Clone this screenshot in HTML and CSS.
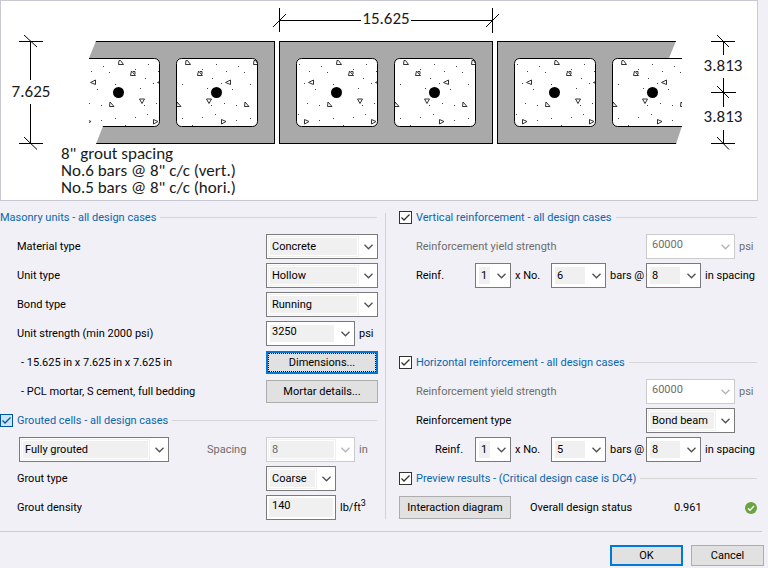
FILE: index.html
```html
<!DOCTYPE html>
<html lang="en">
<head>
  <meta charset="UTF-8" />
  <meta name="viewport" content="width=device-width, initial-scale=1.0"/>
  <title>Masonry wall design</title>
  <link rel="stylesheet" href="styles.css">
</head>
<body>
  <form class="dialog" id="designForm">
    <div class="preview">
      <svg class="drawing" viewBox="1 1 756 199" role="img" aria-label="Wall section">
        <defs>
          <clipPath id="cells">
            <rect x="17.5" y="58.5" width="81" height="68" rx="5" />
            <rect x="115.5" y="58.5" width="81" height="68" rx="5" />
          </clipPath>
          <clipPath id="breakLeft">
            <path d="M96 41L89 58V126H103L96 144H276V41Z" />
          </clipPath>
          <clipPath id="breakRight">
            <path d="M676 41L669 58H682V126L676 144H497V41Z" />
          </clipPath>

          <!-- one tile of the concrete hatch -->
          <g id="hatch">
            <path class="stone" d="M58 60.5L57.500 64.500H62.500L59.500 60.500ZM70.500 71L69.500 75.500H74.500ZM72 71.500H74V74M34.500 80V84.500L29.500 82.500ZM49 102L48.500 106.500H53ZM78.500 99H83.500L81 103.500ZM25.500 119.500V124L30 121.500Z" />
            <path class="grit" d="M20 64.500h1M30 71.500h1M42 66.500h1M48 72.500h1M25 83.500h1M36 89.500h1M54 84.500h1M28 103.500h1M40 105.500h1M19 114.500h1M40 120.500h1M54 118.500h1M64 125.500h1M74 117.500h1M79 88.500h1M84 78.500h1M83 105.500h1M74 69.500h1" />
          </g>

          <g id="block">
            <rect class="shell" x="0.500" y="41.500" width="213" height="102" />
            <rect class="cell" x="17.500" y="58.500" width="81" height="68" rx="5" />
            <rect class="cell" x="115.500" y="58.500" width="81" height="68" rx="5" />
            <g clip-path="url(#cells)">
              <use href="#hatch" />
              <use href="#hatch" x="67" />
              <use href="#hatch" x="135" />
            </g>
            <rect class="edge" x="17.500" y="58.500" width="81" height="68" rx="5" />
            <rect class="edge" x="115.500" y="58.500" width="81" height="68" rx="5" />
            <circle cx="57.500" cy="92.500" r="5.500" />
            <circle cx="155.500" cy="92.500" r="5.500" />
          </g>
        </defs>

        <g clip-path="url(#breakLeft)"><use href="#block" x="61" /></g>
        <use href="#block" x="279" />
        <g clip-path="url(#breakRight)"><use href="#block" x="497" /></g>

        <!-- dimension lines -->
        <path class="dim" d="M30.500 41V80M30.500 104V143M19 41.500H43M19 143.500H43M279.500 8V32M492.500 8V33M279 20.500H361M411 20.500H492M723.500 41V55M723.500 78V107M723.500 130V143M711 41.500H735M711 92.500H736M711 143.500H735" />
        <path class="tick" d="M24 35L37 47M24 137L37 149.500M273 27L286 14M486 27L499 14M717 35L729 47M717 86L729 98M717 137L729 149.500" />

        <text x="31" y="97" text-anchor="middle">7.625</text>
        <text x="386" y="24" text-anchor="middle">15.625</text>
        <text x="723" y="71" text-anchor="middle">3.813</text>
        <text x="723" y="122" text-anchor="middle">3.813</text>
        <text x="61" y="159">8" grout spacing</text>
        <text x="61" y="176">No.6 bars @ 8" c/c (vert.)</text>
        <text x="61" y="193">No.5 bars @ 8" c/c (hori.)</text>
      </svg>
    </div>

    <div class="columns">
      <div class="column left">
        <div class="row legend"><span>Masonry units - all design cases</span></div>
        <div class="row">
          <label for="material">Material type</label>
          <div class="field"><select id="material" class="boxed"><option>Concrete</option></select></div>
        </div>
        <div class="row">
          <label for="unitType">Unit type</label>
          <div class="field"><select id="unitType" class="boxed"><option>Hollow</option></select></div>
        </div>
        <div class="row">
          <label for="bond">Bond type</label>
          <div class="field"><select id="bond" class="boxed"><option>Running</option></select></div>
        </div>
        <div class="row">
          <label for="strength">Unit strength (min 2000 psi)</label>
          <div class="field"><select id="strength" class="medium edit"><option>3250</option></select><span class="unit">psi</span></div>
        </div>
        <div class="row">
          <span class="note">- 15.625 in x 7.625 in x 7.625 in</span>
          <div class="field"><button type="button" class="focused">Dimensions...</button></div>
        </div>
        <div class="row">
          <span class="note">- PCL mortar, S cement, full bedding</span>
          <div class="field"><button type="button">Mortar details...</button></div>
        </div>

        <div class="row legend">
          <input type="checkbox" id="grouted" class="hot" checked />
          <label for="grouted">Grouted cells - all design cases</label>
        </div>
        <div class="row grouting">
          <select id="grouting" class="boxed wide" aria-label="Grouting"><option>Fully grouted</option></select>
          <label for="spacing" class="muted">Spacing</label>
          <div class="field"><select id="spacing" class="boxed medium" disabled><option>8</option></select><span class="unit muted">in</span></div>
        </div>
        <div class="row">
          <label for="groutType">Grout type</label>
          <div class="field"><select id="groutType" class="boxed small"><option>Coarse</option></select></div>
        </div>
        <div class="row">
          <label for="density">Grout density</label>
          <div class="field"><input type="text" id="density" class="small" value="140" /><span class="unit">lb/ft<sup>3</sup></span></div>
        </div>
      </div>

      <div class="column right">
        <div class="row legend">
          <input type="checkbox" id="vertical" checked />
          <label for="vertical">Vertical reinforcement - all design cases</label>
        </div>
        <div class="row">
          <label for="vYield" class="muted">Reinforcement yield strength</label>
          <div class="field"><select id="vYield" class="medium edit" disabled><option>60000</option></select><span class="unit muted">psi</span></div>
        </div>
        <div class="row">
          <label for="vCount">Reinf.</label>
          <select id="vCount" class="tiny"><option>1</option></select>
          <label for="vSize" class="between">x No.</label>
          <select id="vSize" class="short"><option>6</option></select>
          <label for="vSpacing" class="between">bars @</label>
          <div class="field"><select id="vSpacing" class="short"><option>8</option></select><span class="unit">in spacing</span></div>
        </div>

        <div class="row legend second">
          <input type="checkbox" id="horizontal" checked />
          <label for="horizontal">Horizontal reinforcement - all design cases</label>
        </div>
        <div class="row">
          <label for="hYield" class="muted">Reinforcement yield strength</label>
          <div class="field"><select id="hYield" class="medium edit" disabled><option>60000</option></select><span class="unit muted">psi</span></div>
        </div>
        <div class="row">
          <label for="hType">Reinforcement type</label>
          <div class="field"><select id="hType" class="boxed medium"><option>Bond beam</option></select></div>
        </div>
        <div class="row indented">
          <label for="hCount">Reinf.</label>
          <select id="hCount" class="tiny"><option>1</option></select>
          <label for="hSize" class="between">x No.</label>
          <select id="hSize" class="short"><option>5</option></select>
          <label for="hSpacing" class="between">bars @</label>
          <div class="field"><select id="hSpacing" class="short"><option>8</option></select><span class="unit">in spacing</span></div>
        </div>

        <div class="row legend">
          <input type="checkbox" id="results" checked />
          <label for="results">Preview results - (Critical design case is DC4)</label>
        </div>
        <div class="row status">
          <button type="button">Interaction diagram</button>
          <span class="status-name">Overall design status</span>
          <output class="status-value">0.961</output>
          <svg class="status-icon" viewBox="0 0 12 12" role="img" aria-label="Passed">
            <circle cx="6" cy="6" r="6" />
            <path d="M3 6.200L5 8.200L9 4" />
          </svg>
        </div>
      </div>
    </div>

    <hr class="divider" />
    <div class="footer">
      <button type="submit" class="default">OK</button>
      <button type="button">Cancel</button>
    </div>
  </form>
</body>
</html>
```
FILE: styles.css
```css
* {
  box-sizing: border-box;
}

body {
  margin: 0;
  background: #f1f0f6;
  color: #000;
  font-family: Tahoma, Roboto, sans-serif;
  font-size: 11px;
  line-height: 14px;
}

/* wall drawing */
.preview {
  margin-right: 10px;
  background: #fff;
  border: 1px solid #c9c9d6;
}

.drawing {
  display: block;
  width: 100%;
  font-family: Calibri, Lato, sans-serif;
  font-size: 17px;
}

.drawing text {
  fill: #1a1a1a;
}

.shell {
  fill: #a9a9a9;
  stroke: #000;
}

.cell {
  fill: #fff;
}

.edge {
  fill: none;
  stroke: #000;
}

.stone {
  fill: none;
  stroke: #333;
}

.grit {
  stroke: #444;
}

.dim,
.tick {
  fill: none;
  stroke: #000;
}

/* settings */
.columns {
  display: grid;
  grid-template-columns: minmax(386px, 1fr) minmax(372px, 1fr);
  margin: 2px 10px 0 0;
}

.left {
  padding-right: 8px;
  background: linear-gradient(#d3d3d6, #d3d3d6) no-repeat right 10px / 1px calc(100% - 13px);
}

.right {
  padding-left: 13px;
}

.row {
  display: flex;
  align-items: center;
  height: 29px;
  padding-left: 17px;
  white-space: nowrap;
}

.row > label:first-child,
.note {
  flex: 1;
}

.note {
  padding-left: 4px;
}

.field {
  display: flex;
  align-items: center;
  width: 112px;
}

.unit {
  padding-left: 4px;
}

.unit sup {
  font-size: 9px;
  line-height: 0;
}

.between {
  width: 40px;
  padding-left: 4px;
}

.muted {
  color: #6d6d6d;
}

.legend {
  padding: 0 1px 0 0;
  gap: 4px;
  color: #0a66b0;
}

.legend::after {
  content: "";
  flex: 1;
  height: 1px;
  background: #d6d6d6;
}

.second {
  margin-top: 58px;
}

.indented {
  padding-left: 36px;
}

.grouting {
  padding-left: 19px;
}

.grouting label {
  flex: 1;
  padding-left: 38px;
}

/* controls */
select,
input,
button {
  margin: 0;
  font: inherit;
  color: inherit;
  border-radius: 0;
}

select,
input[type="text"] {
  width: 112px;
  height: 25px;
  padding: 0 0 0 5px;
  border: 1px solid #7a7a7a;
  outline: none;
}

select {
  appearance: none;
  --arrow: url("data:image/svg+xml,%3Csvg xmlns='http://www.w3.org/2000/svg' width='9' height='6'%3E%3Cpath d='M.5 .8L4.500 4.800L8.500 .8' fill='none' stroke='%23505050' stroke-width='1.300'/%3E%3C/svg%3E");
  background:
    var(--arrow) no-repeat right 4px center,
    linear-gradient(#f0f0f0, #f0f0f0) no-repeat 3px 3px / calc(100% - 23px) calc(100% - 6px),
    #fff;
}

select.boxed {
  background:
    var(--arrow) no-repeat right 4px center,
    linear-gradient(#f0f0f0, #f0f0f0) no-repeat 3px 3px / calc(100% - 23px) calc(100% - 6px),
    linear-gradient(#fff, #fff) no-repeat 2px 2px / calc(100% - 21px) calc(100% - 4px),
    linear-gradient(#f0f0f0, #f0f0f0) no-repeat 1px 1px / calc(100% - 19px) calc(100% - 2px),
    #fff;
}

select:disabled {
  --arrow: url("data:image/svg+xml,%3Csvg xmlns='http://www.w3.org/2000/svg' width='9' height='6'%3E%3Cpath d='M.5 .8L4.500 4.800L8.500 .8' fill='none' stroke='%23b4b4b4' stroke-width='1.300'/%3E%3C/svg%3E");
  border-color: #ccc;
  color: #6d6d6d;
  opacity: 1;
}

select.edit,
input[type="text"] {
  padding-bottom: 4px;
}

select.edit:disabled {
  background: var(--arrow) no-repeat right 4px center, #fff;
}

input[type="text"] {
  background: linear-gradient(#f0f0f0, #f0f0f0) no-repeat 2px 2px / calc(100% - 4px) calc(100% - 4px), #fff;
}

select.wide {
  width: 150px;
}

select.medium {
  width: 89px;
}

select.short {
  width: 55px;
}

select.tiny {
  width: 36px;
}

select.small,
input.small {
  width: 70px;
}

input[type="checkbox"] {
  appearance: none;
  width: 13px;
  height: 13px;
  border: 1px solid #333;
  background: url("data:image/svg+xml,%3Csvg xmlns='http://www.w3.org/2000/svg' width='11' height='11'%3E%3Cpath d='M1.500 5.500L4 8L9.500 2.500' fill='none' stroke='%23333' stroke-width='1.300'/%3E%3C/svg%3E") no-repeat center #fff;
}

input[type="checkbox"].hot {
  border-color: #00559b;
  background-color: #cce4f7;
  background-image: url("data:image/svg+xml,%3Csvg xmlns='http://www.w3.org/2000/svg' width='11' height='11'%3E%3Cpath d='M1.500 5.500L4 8L9.500 2.500' fill='none' stroke='%2300559b' stroke-width='1.300'/%3E%3C/svg%3E");
}

button {
  width: 112px;
  height: 23px;
  padding: 0;
  background: #e1e1e1;
  border: 1px solid #adadad;
}

button.focused,
button.default {
  border: 2px solid #0078d7;
}

button.focused {
  outline: 1px dotted #000;
  outline-offset: -3px;
}

/* results */
.status {
  padding: 0 1px 0 0;
}

.status-name {
  flex: 1;
  padding-left: 19px;
}

.status-value {
  width: 71px;
}

.status-icon {
  width: 12px;
  height: 12px;
}

.status-icon circle {
  fill: #6aa43c;
}

.status-icon path {
  fill: none;
  stroke: #fff;
  stroke-width: 1.5;
}

.divider {
  height: 1px;
  margin: 9px 6px 13px 0;
  border: none;
  background: #cdcdd0;
}

.footer {
  display: flex;
  justify-content: flex-end;
  gap: 8px;
  padding-right: 4px;
}

.footer button {
  width: 73px;
  height: 21px;
}
```
